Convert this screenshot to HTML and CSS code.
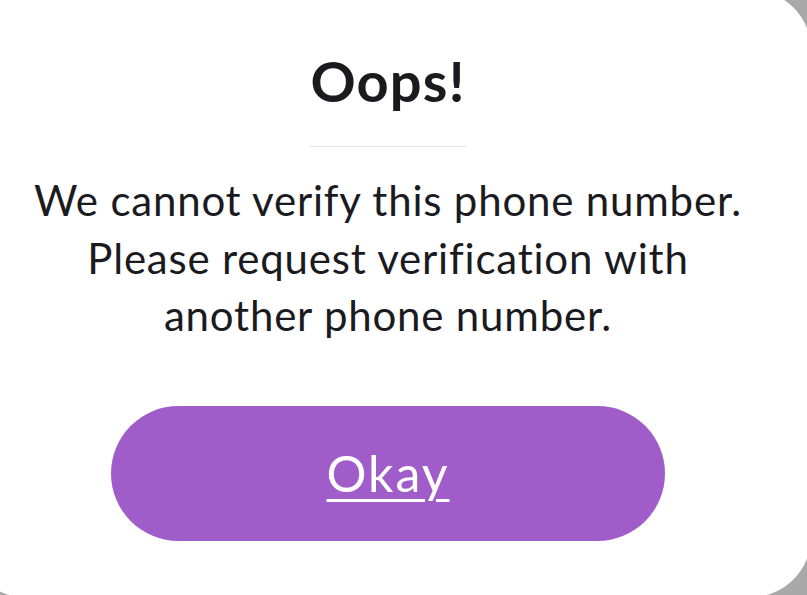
FILE: index.html
```html
<!DOCTYPE html>
<html lang="en">
<head>
    <meta charset="UTF-8">
    <title>Oops!</title>
    <link rel="stylesheet" href="styles.css">
</head>
<body>
    <div class="dialog">
        <h2 class="dialog-title">Oops!</h2>
        <div class="dialog-divider"></div>
        <p class="dialog-message">
            We cannot verify this phone number.<br>
            Please request verification with<br>
            another phone number.
        </p>
        <button class="dialog-button">Okay</button>
    </div>
</body>
</html>
```

FILE: styles.css
```css
body {
    margin: 0;
    height: 595px;
    overflow: hidden;
    background: #a9a9a9;
    font-family: 'Lato', 'Noto Sans', sans-serif;
    font-variant-ligatures: none;
    color: #1b1b1f;
}

/* modal card, runs past the left edge of the screen */
.dialog {
    width: 846px;
    height: 607px;
    margin: -10px 0 0 -35px;
    padding-top: 59px;
    box-sizing: border-box;
    background: #fff;
    border-radius: 60px;
    display: flex;
    flex-direction: column;
    align-items: center;
}

.dialog-title {
    margin: 0;
    font-size: 56px;
    line-height: 64px;
    font-weight: 700;
    letter-spacing: 1.2px;
}

.dialog-divider {
    width: 156px;
    height: 1px;
    margin-top: 33px;
    background: #e3e3e3;
}

.dialog-message {
    margin: 25px 0 0;
    font-size: 42px;
    line-height: 57.5px;
    letter-spacing: 0.8px;
    text-align: center;
}

.dialog-button {
    margin-top: 61px;
    width: 554px;
    height: 135px;
    border: none;
    border-radius: 68px;
    background: #a05dca;
    color: #fff;
    font-family: inherit;
    font-size: 50px;
    letter-spacing: 2px;
    text-decoration: underline;
    text-decoration-thickness: 3px;
    text-underline-offset: 7px;
    cursor: pointer;
}
```
